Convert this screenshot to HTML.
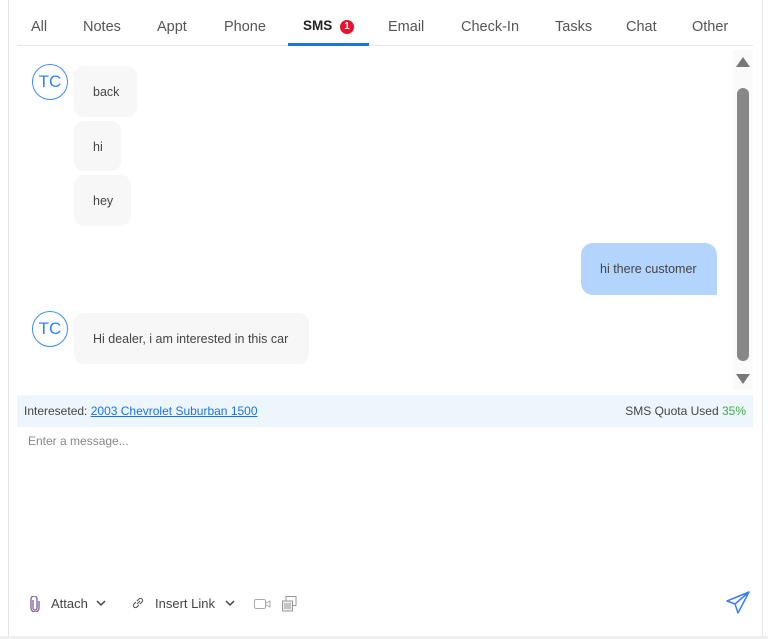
<!DOCTYPE html>
<html><head><meta charset="utf-8"><style>
*{margin:0;padding:0;box-sizing:border-box}
body{width:768px;height:639px;background:#fff;font-family:"Liberation Sans",sans-serif;position:relative;overflow:hidden;color:#333}
.frame{position:absolute;left:8px;top:-1px;width:755px;height:638px;border:1px solid #e4e4e4;border-top:none}
.bottom{position:absolute;left:0;top:636px;width:768px;height:3px;background:#efefef}
.tab{position:absolute;top:19px;font-size:14.5px;color:#555;white-space:nowrap}
.tline{position:absolute;left:17px;top:45px;width:736px;height:1px;background:#e3e7eb}
.ul{position:absolute;left:288px;top:43px;width:81px;height:3px;background:#1a73e8}
.badge{position:absolute;left:340px;top:20px;width:14px;height:14px;border-radius:50%;background:#e8112d;color:#fff;font-size:10px;font-weight:bold;text-align:center;line-height:14px}
.av{position:absolute;left:32px;width:36px;height:36px;border:1.5px solid #3a8ef6;border-radius:50%;color:#2f86f0;font-size:17px;text-align:center;line-height:33px}
.b{position:absolute;background:#f7f7f7;border-radius:10px;font-size:12.5px;color:#444;line-height:1;padding-top:20px;padding-left:19px}
.me{background:#b3d4fc;border-radius:12px 12px 0 12px}
.track{position:absolute;left:733px;top:50px;width:20px;height:340px;background:#fafafa}
.thumb{position:absolute;left:737px;top:88px;width:12px;height:273px;background:#878787;border-radius:6px}
.info{position:absolute;left:17px;top:395px;width:736px;height:32px;background:#eef6fd;font-size:12px;line-height:32px;padding-left:7px;color:#444}
.info a{color:#1a73e8;text-decoration:underline}
.ph{position:absolute;left:28px;top:434px;font-size:12px;color:#888}
.tb{position:absolute;top:596px;font-size:13px;color:#444}
</style></head><body>
<div class="frame"></div><div class="bottom"></div>
<div class="tab" style="left:31px">All</div>
<div class="tab" style="left:83px">Notes</div>
<div class="tab" style="left:157px">Appt</div>
<div class="tab" style="left:224px">Phone</div>
<div class="tab" style="left:303px;color:#222;font-weight:bold;font-size:13.5px;top:18px">SMS</div>
<div class="badge">1</div>
<div class="tab" style="left:388px">Email</div>
<div class="tab" style="left:461px">Check-In</div>
<div class="tab" style="left:555px">Tasks</div>
<div class="tab" style="left:626px">Chat</div>
<div class="tab" style="left:692px">Other</div>
<div class="tline"></div><div class="ul"></div>

<div class="av" style="top:64px">TC</div>
<div class="b" style="left:74px;top:66px;width:63px;height:51px">back</div>
<div class="b" style="left:74px;top:121px;width:47px;height:50px">hi</div>
<div class="b" style="left:74px;top:175px;width:57px;height:51px">hey</div>
<div class="b me" style="left:581px;top:243px;width:136px;height:52px">hi there customer</div>
<div class="av" style="top:311px">TC</div>
<div class="b" style="left:74px;top:313px;width:235px;height:51px">Hi dealer, i am interested in this car</div>

<div class="track"></div>
<svg style="position:absolute;left:736px;top:57px" width="14" height="11"><polygon points="7,0 14,10 0,10" fill="#777"/></svg>
<div class="thumb"></div>
<svg style="position:absolute;left:736px;top:374px" width="14" height="11"><polygon points="0,0 14,0 7,10" fill="#777"/></svg>

<div class="info">Intereseted: <a>2003 Chevrolet Suburban 1500</a><span style="position:absolute;right:7px">SMS Quota Used <span style="color:#3cae3c">35%</span></span></div>
<div class="ph">Enter a message...</div>

<svg style="position:absolute;left:30px;top:596px" width="10" height="16" viewBox="0 0 10 16"><path d="M3 4v8a2 2 0 0 0 4 0V3a3 3 0 0 0-6 0v9a4 4 0 0 0 8 0V5" fill="none" stroke="#8a6aa0" stroke-width="1.4"/></svg>
<div class="tb" style="left:51px">Attach</div>
<svg style="position:absolute;left:96px;top:600px" width="10" height="7"><path d="M1 1l4 4 4-4" fill="none" stroke="#444" stroke-width="1.5"/></svg>
<svg style="position:absolute;left:131px;top:596px" width="14" height="14" viewBox="0 0 14 14"><path d="M6 8l3-3M5 6l-2 2a2 2 0 0 0 3 3l2-2M9 8l2-2a2 2 0 0 0-3-3L6 5" fill="none" stroke="#555" stroke-width="1.1"/></svg>
<div class="tb" style="left:155px">Insert Link</div>
<svg style="position:absolute;left:225px;top:600px" width="10" height="7"><path d="M1 1l4 4 4-4" fill="none" stroke="#444" stroke-width="1.5"/></svg>
<svg style="position:absolute;left:254px;top:599px" width="17" height="10"><rect x="0.5" y="0.5" width="11" height="9" rx="1.5" fill="none" stroke="#aaa"/><path d="M12 4l4-2v6l-4-2" fill="none" stroke="#aaa"/></svg>
<svg style="position:absolute;left:282px;top:596px" width="15" height="16"><rect x="4" y="0.5" width="10" height="9" fill="none" stroke="#999"/><rect x="0.5" y="5" width="10" height="10" fill="#eee" stroke="#999"/><path d="M2 8h7M2 10h7M2 12h7" stroke="#999"/></svg>
<svg style="position:absolute;left:726px;top:591px" width="24" height="24" viewBox="0 0 24 24"><path d="M23 1L1 10l8 3 3 9zM23 1L9 13" fill="none" stroke="#3a7ff0" stroke-width="1.5" stroke-linejoin="round"/></svg>
</body></html>
